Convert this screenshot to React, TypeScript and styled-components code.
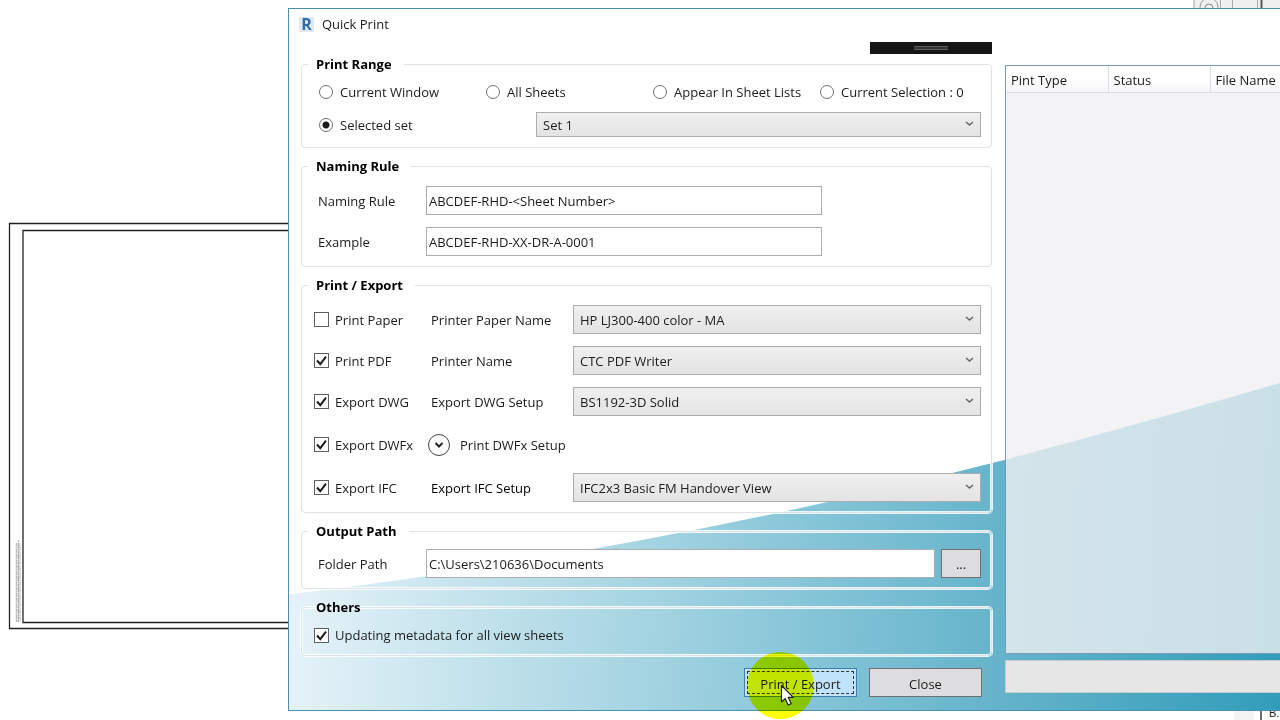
import React, { useState } from "react";
import styled, { createGlobalStyle, css } from "styled-components";

const Global = createGlobalStyle`
  *, *::before, *::after { box-sizing: border-box; }
  body {
    margin: 0;
    background: #fff;
    color: #1c1c1c;
    font-family: "Open Sans", "Noto Sans", sans-serif;
    font-size: 13px;
    line-height: 20px;
  }
  button, input, select { font: inherit; color: inherit; margin: 0; }
`;

const Desktop = styled.div`
  position: relative;
  min-height: 100vh;
  overflow: hidden;
  padding: 8px 0 9px 22.5%;
`;

const SheetCanvas = styled.svg`
  position: absolute;
  left: 0;
  top: 0;
`;

const Palette = styled.svg`
  position: absolute;
  right: 0;
  top: 0;
`;

const PaletteFooter = styled.div`
  position: absolute;
  right: 0;
  top: 700px;
  height: 20px;
  width: 46px;
  padding: 6px 0 0 35px;
  background: linear-gradient(90deg, #f3f3f3 0 20px, #fff 20px 26px, #6e6e6e 26px 28px, #fff 28px);
  font: 11px/14px "Liberation Sans", sans-serif;
  white-space: nowrap;
`;

const Dialog = styled.main`
  position: relative;
  z-index: 1;
  border: 1px solid #4a90bb;
  border-right: 0;
  background: #fff;
`;

const Wave = styled.svg`
  position: absolute;
  inset: 0;
  width: 100%;
  height: 100%;
`;

const TitleBar = styled.header`
  position: relative;
  display: flex;
  align-items: center;
  gap: 8px;
  height: 32px;
  padding: 0 10px 2px;
`;

const Logo = styled.span`
  width: 15px;
  height: 15px;
  background: #dfe9f6;
  color: #2e6da4;
  font: bold 16px/15px "Open Sans", sans-serif;
  text-align: center;
`;

const Title = styled.h1`
  margin: 0;
  font-size: 13px;
  font-weight: 400;
`;

const Body = styled.div`
  position: relative;
  display: grid;
  grid-template-columns: minmax(0, 1fr) 275px;
  column-gap: 13px;
  padding: 0 0 13px 12px;
`;

const Form = styled.form`
  display: flex;
  flex-direction: column;
  gap: 8px;
`;

const Grip = styled.div`
  display: flex;
  align-items: center;
  justify-content: center;
  align-self: flex-end;
  width: 122px;
  height: 12px;
  margin: 1px 0 -8px;
  background: #161616;
  &::after {
    content: "";
    width: 34px;
    height: 4px;
    border: solid #5c5c5c;
    border-width: 1px 0;
    background: #333;
  }
`;

const Group = styled.fieldset<{ $top: number }>`
  min-width: 0;
  margin: 0;
  padding: ${(p) => p.$top}px 10px 10px 12px;
  border: 1px solid #dde2e6;
  border-radius: 4px;
  box-shadow: 0 0 0 1px rgba(255, 255, 255, 0.85), inset 0 0 0 1px rgba(255, 255, 255, 0.85);
`;

const Legend = styled.legend`
  margin-left: -6px;
  padding: 0 12px 0 8px;
  color: #000;
  font-weight: 700;
`;

const RadioGrid = styled.div`
  display: grid;
  grid-template-columns: repeat(4, minmax(0, 1fr));
  margin: 0 -6px 10px 5px;
`;

const SetRow = styled.div`
  display: grid;
  grid-template-columns: 217px minmax(0, 1fr);
  align-items: center;
  padding-left: 5px;
`;

const Choice = styled.label<{ $gap: number }>`
  display: flex;
  align-items: center;
  gap: ${(p) => p.$gap}px;
  white-space: nowrap;
`;

const Radio = styled.input`
  appearance: none;
  width: 14px;
  height: 14px;
  flex: none;
  border: 1px solid #707070;
  border-radius: 50%;
  background: #fff;
  &:checked {
    background: radial-gradient(circle, #1c1c1c 3px, #fff 4px);
  }
`;

const CheckWrap = styled.span`
  position: relative;
  display: flex;
  svg {
    position: absolute;
    inset: 0;
    pointer-events: none;
  }
`;

const CheckBox = styled.input`
  appearance: none;
  width: 15px;
  height: 15px;
  border: 1px solid #5f5f5f;
  background: #fff;
`;

const FieldGrid = styled.div`
  display: grid;
  grid-template-columns: 108px minmax(0, 396px);
  align-items: center;
  row-gap: 12px;
  padding-left: 4px;
`;

const TextBox = styled.input`
  width: 100%;
  min-width: 0;
  height: 29px;
  padding: 0 2px;
  border: 1px solid #abadb3;
  border-radius: 0;
  background: #fff;
`;

const ExportGrid = styled.div`
  display: grid;
  grid-template-columns: 114px 145px minmax(0, 1fr);
  align-items: center;
  row-gap: 12px;
`;

const FieldLabel = styled.label<{ $strong?: boolean }>`
  padding-left: 3px;
  color: ${(p) => (p.$strong ? "#000" : "inherit")};
`;

const Expander = styled.div`
  grid-column: 2 / -1;
  display: flex;
  align-items: center;
  gap: 10px;
  height: 33px;
`;

const RoundButton = styled.button`
  width: 22px;
  height: 22px;
  padding: 0;
  border: 1px solid #444;
  border-radius: 50%;
  background: #fff;
  display: grid;
  place-items: center;
`;

const SelectWrap = styled.div`
  position: relative;
  svg {
    position: absolute;
    right: 7px;
    top: calc(50% - 4px);
    pointer-events: none;
  }
`;

const SelectBox = styled.select<{ $height: number }>`
  appearance: none;
  display: block;
  width: 100%;
  height: ${(p) => p.$height}px;
  padding: 0 24px 0 6px;
  border: 1px solid #acacac;
  border-radius: 0;
  background: linear-gradient(#f0f0f0, #e3e3e3);
`;

const PathRow = styled.div`
  display: grid;
  grid-template-columns: 108px minmax(0, 1fr) 40px;
  align-items: center;
  padding-left: 4px;
`;

const PathBox = styled.div`
  padding-right: 6px;
`;

const buttonBase = css`
  padding: 0;
  border: 1px solid #707070;
  border-radius: 0;
  background: #dddddf;
`;

const BrowseButton = styled.button`
  ${buttonBase}
  height: 29px;
`;

const Actions = styled.div`
  display: flex;
  justify-content: flex-end;
  gap: 12px;
  padding: 4px 10px 0 0;
`;

const ActionWrap = styled.div`
  position: relative;
`;

const ActionButton = styled.button<{ $focused?: boolean }>`
  ${buttonBase}
  width: 113px;
  height: 29px;
  padding-top: 2px;
  ${(p) =>
    p.$focused &&
    css`
      border-color: #3c7fb1;
      background: #c0e3fb;
      outline: 1px dashed #333;
      outline-offset: -4px;
    `}
`;

const ClickHalo = styled.div`
  position: absolute;
  left: 3px;
  top: -16px;
  width: 67px;
  height: 67px;
  border-radius: 50%;
  background: #ff0;
  mix-blend-mode: multiply;
  pointer-events: none;
`;

const Pointer = styled.svg`
  position: absolute;
  left: 36px;
  top: 16px;
  pointer-events: none;
`;

const Results = styled.section`
  display: flex;
  flex-direction: column;
  gap: 6px;
  padding: 24px 0 4px;
`;

const ListView = styled.div`
  flex: 1;
  border: 1px solid #7d9ab8;
  border-right: 0;
  background: rgba(240, 240, 242, 0.8);
`;

const ListTable = styled.table`
  width: 100%;
  table-layout: fixed;
  border-collapse: collapse;
`;

const HeadCell = styled.th<{ $last?: boolean }>`
  width: ${(p) => (p.$last ? "auto" : "102px")};
  height: 26px;
  padding: 2px 0 0 5px;
  border-right: ${(p) => (p.$last ? "0" : "1px solid #dcdfe8")};
  border-bottom: 1px solid #dcdfe8;
  background: linear-gradient(#fff 0 45%, #f5f6f9);
  font-weight: 400;
  text-align: left;
  white-space: nowrap;
`;

const Progress = styled.div`
  height: 33px;
  border: 1px solid #c4cccd;
  border-right: 0;
  background: #e6e6e6;
`;

const Chevron = () => (
  <svg width="9" height="6" viewBox="0 0 9 6" aria-hidden="true">
    <path d="M1 1l3.500 3L8 1" fill="none" stroke="#666" strokeWidth="1.500" />
  </svg>
);

function Check({ label, initial }: { label: string; initial: boolean }) {
  const [on, setOn] = useState(initial);
  return (
    <Choice $gap={6}>
      <CheckWrap>
        <CheckBox type="checkbox" checked={on} onChange={() => setOn(!on)} />
        {on && (
          <svg width="15" height="15" viewBox="0 0 15 15" aria-hidden="true">
            <path d="M3 7.500l3.300 3.600L12 3.600" fill="none" stroke="#1c1c1c" strokeWidth="2" />
          </svg>
        )}
      </CheckWrap>
      {label}
    </Choice>
  );
}

function Combo({ id, value, label, height = 29 }: { id: string; value: string; label?: string; height?: number }) {
  return (
    <SelectWrap>
      <SelectBox id={id} $height={height} aria-label={label} defaultValue={value}>
        <option>{value}</option>
      </SelectBox>
      <Chevron />
    </SelectWrap>
  );
}

const ranges = ["Current Window", "All Sheets", "Appear In Sheet Lists", "Current Selection : 0"];

const exportsBefore = [
  { check: "Print Paper", on: false, label: "Printer Paper Name", id: "paper", value: "HP LJ300-400 color - MA" },
  { check: "Print PDF", on: true, label: "Printer Name", id: "pdf", value: "CTC PDF Writer" },
  { check: "Export DWG", on: true, label: "Export DWG Setup", id: "dwg", value: "BS1192-3D Solid" },
];

export default function App() {
  const [range, setRange] = useState("Selected set");
  const radio = (name: string) => (
    <Choice $gap={7} key={name}>
      <Radio type="radio" name="range" checked={range === name} onChange={() => setRange(name)} />
      {name}
    </Choice>
  );

  return (
    <Desktop>
      <Global />
      <SheetCanvas width="700" height="640" aria-hidden="true">
        <g fill="none" stroke="#222">
          <path d="M700 223.500H9.500V628.500H700" strokeWidth="1.300" />
          <path d="M700 230.500H23V622.500H700" strokeWidth="1.300" />
          <path d="M18 543V622" stroke="#dcdcdc" strokeWidth="5" />
          <path d="M16.500 543V622" stroke="#bbb" strokeDasharray="3 1 1 1 4 1" />
          <path d="M18.500 540V622" stroke="#aaa" strokeDasharray="2 1 5 1 1 1" />
          <path d="M20.500 545V622" stroke="#ccc" strokeDasharray="1 1 3 2" />
        </g>
      </SheetCanvas>
      <Palette width="87" height="10" aria-hidden="true">
        <rect width="87" height="10" fill="#f0f0f0" />
        <path d="M1 0v10M27.500 0v10M39.500 0v10M64.500 0v10" stroke="#aaa" />
        <path d="M68.500 0v10" stroke="#555" strokeWidth="2" />
        <circle cx="16" cy="7" r="9" fill="none" stroke="#999" />
        <circle cx="16" cy="8" r="4" fill="none" stroke="#888" />
      </Palette>
      <PaletteFooter>B.</PaletteFooter>

      <Dialog aria-label="Quick Print">
        <Wave viewBox="288 8 992 703" preserveAspectRatio="none" aria-hidden="true">
          <defs>
            <linearGradient id="teal" gradientUnits="userSpaceOnUse" x1="288" y1="650" x2="1280" y2="690">
              <stop offset="0" stopColor="#e6f2f9" />
              <stop offset="0.170" stopColor="#c6e4ed" />
              <stop offset="0.370" stopColor="#a3d3e1" />
              <stop offset="0.520" stopColor="#86c5d8" />
              <stop offset="0.720" stopColor="#64b3ca" />
              <stop offset="1" stopColor="#329dba" />
            </linearGradient>
          </defs>
          <path d="M288 595Q640 553 1005 460Q1140 424 1280 383V711H288Z" fill="url(#teal)" />
        </Wave>
        <TitleBar>
          <Logo aria-hidden="true">R</Logo>
          <Title>Quick Print</Title>
        </TitleBar>
        <Body>
          <Form onSubmit={(e) => e.preventDefault()}>
            <Grip />
            <Group $top={8}>
              <Legend>Print Range</Legend>
              <RadioGrid>{ranges.map(radio)}</RadioGrid>
              <SetRow>
                {radio("Selected set")}
                <Combo id="set" value="Set 1" label="Sheet set" height={25} />
              </SetRow>
            </Group>

            <Group $top={10}>
              <Legend>Naming Rule</Legend>
              <FieldGrid>
                <label htmlFor="rule">Naming Rule</label>
                <TextBox id="rule" defaultValue="ABCDEF-RHD-<Sheet Number>" />
                <label htmlFor="example">Example</label>
                <TextBox id="example" defaultValue="ABCDEF-RHD-XX-DR-A-0001" />
              </FieldGrid>
            </Group>

            <Group $top={10}>
              <Legend>Print / Export</Legend>
              <ExportGrid>
                {exportsBefore.map((r) => (
                  <React.Fragment key={r.id}>
                    <Check label={r.check} initial={r.on} />
                    <FieldLabel htmlFor={r.id}>{r.label}</FieldLabel>
                    <Combo id={r.id} value={r.value} />
                  </React.Fragment>
                ))}
                <Check label="Export DWFx" initial />
                <Expander>
                  <RoundButton type="button" aria-labelledby="dwfx">
                    <svg width="10" height="8" viewBox="0 0 10 8" aria-hidden="true">
                      <path d="M1.500 2L5 5.500 8.500 2" fill="none" stroke="#222" strokeWidth="2" />
                    </svg>
                  </RoundButton>
                  <span id="dwfx">Print DWFx Setup</span>
                </Expander>
                <Check label="Export IFC" initial />
                <FieldLabel htmlFor="ifc" $strong>
                  Export IFC Setup
                </FieldLabel>
                <Combo id="ifc" value="IFC2x3 Basic FM Handover View" />
              </ExportGrid>
            </Group>

            <Group $top={8}>
              <Legend>Output Path</Legend>
              <PathRow>
                <label htmlFor="folder">Folder Path</label>
                <PathBox>
                  <TextBox id="folder" defaultValue="C:\Users\210636\Documents" />
                </PathBox>
                <BrowseButton type="button">...</BrowseButton>
              </PathRow>
            </Group>

            <Group $top={8}>
              <Legend>Others</Legend>
              <Check label="Updating metadata for all view sheets" initial />
            </Group>

            <Actions>
              <ActionWrap>
                <ActionButton type="submit" $focused>
                  Print / Export
                </ActionButton>
                <ClickHalo />
                <Pointer width="15" height="23" viewBox="0 0 15 23" aria-hidden="true">
                  <path
                    d="M1.500 1.500V18l3.700-3.400 3 6.400 3-1.400-3-6.200h5z"
                    fill="#fff"
                    stroke="#222"
                    strokeWidth="1.200"
                    strokeLinejoin="round"
                  />
                </Pointer>
              </ActionWrap>
              <ActionButton type="button">Close</ActionButton>
            </Actions>
          </Form>

          <Results>
            <ListView>
              <ListTable>
                <thead>
                  <tr>
                    <HeadCell scope="col">Pint Type</HeadCell>
                    <HeadCell scope="col">Status</HeadCell>
                    <HeadCell scope="col" $last>
                      File Name
                    </HeadCell>
                  </tr>
                </thead>
              </ListTable>
            </ListView>
            <Progress role="progressbar" aria-label="Progress" />
          </Results>
        </Body>
      </Dialog>
    </Desktop>
  );
}
